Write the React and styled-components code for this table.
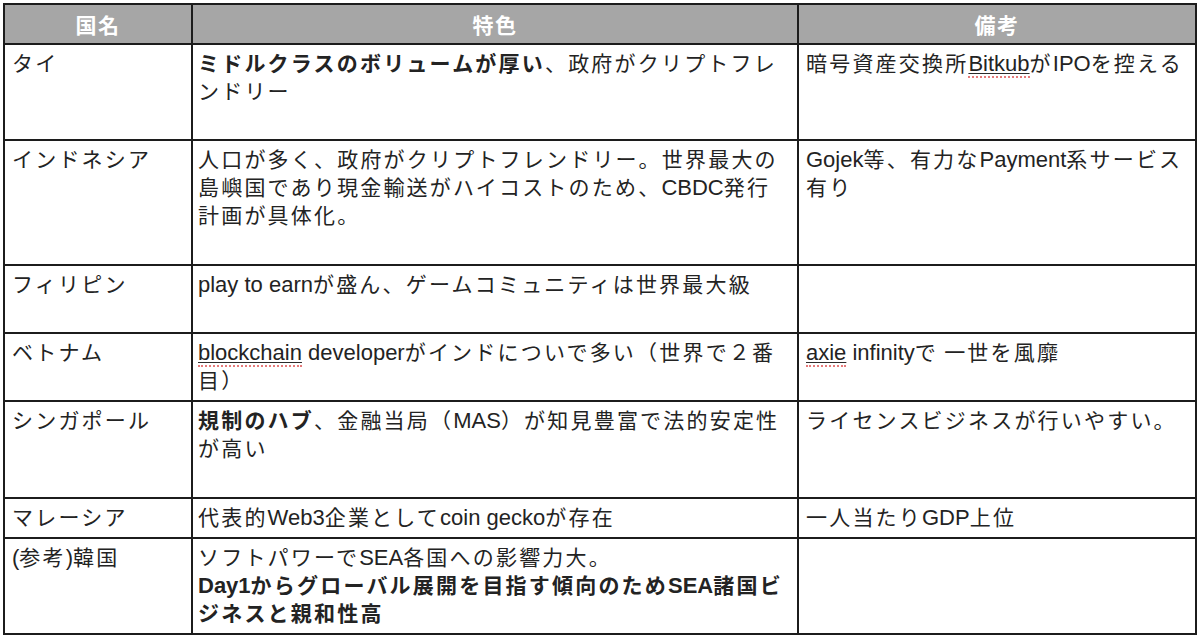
import React from 'react';
import styled, { createGlobalStyle } from 'styled-components';

const Global = createGlobalStyle`
  html, body { margin: 0; padding: 0; background: #fff; }
  body { font-family: "Liberation Sans", "Noto Sans CJK JP", sans-serif; }
`;

const Page = styled.div`
  width: 1200px;
  height: 637px;
  box-sizing: border-box;
  padding: 3px 0 0 3px;
  background: #fff;
`;

const Table = styled.table`
  border-collapse: collapse;
  table-layout: fixed;
  width: 1194px;
  font-family: "Liberation Sans", "Noto Sans CJK JP", sans-serif;
  color: #232323;
`;

const Col = styled.col`
  width: ${(p) => p.$w}px;
`;

const HeadRow = styled.tr`
  height: 40px;
  background: #a6a6a6;
`;

const HeadCell = styled.th`
  border: 2px solid #1c1c1c;
  padding: 0;
  color: #fff;
  font-size: 21px;
  font-weight: 700;
  letter-spacing: 1.5px;
  text-align: center;
  vertical-align: middle;
`;

const Row = styled.tr`
  height: ${(p) => p.$h}px;
`;

const Cell = styled.td`
  border: 2px solid #1c1c1c;
  padding: 5px 6px 0 ${(p) => p.$pl}px;
  vertical-align: top;
  font-size: 21px;
  line-height: 28px;
  letter-spacing: 2.2px;
  white-space: nowrap;
`;

const Latin = styled.span`
  letter-spacing: 0;
  font-size: 22px;
`;

const Spell = styled(Latin)`
  text-decoration: underline 1px #2a2a2a;
  text-underline-offset: 2px;
  border-bottom: 2px dotted #e57a7a;
`;

const Strong = styled.strong`
  font-weight: 700;
`;

const tx = (s) =>
  s.split(/([\x20-\x7E]+)/).map((part, i) =>
    /^[\x20-\x7E]+$/.test(part) ? <Latin key={i}>{part}</Latin> : part
  );

const rows = [
  {
    h: 96,
    name: 'タイ',
    feat: (
      <>
        <Strong>{tx('ミドルクラスのボリュームが厚い')}</Strong>
        {tx('、政府がクリプトフレ')}
        <br />
        {tx('ンドリー')}
      </>
    ),
    note: (
      <>
        {tx('暗号資産交換所')}
        <Spell>Bitkub</Spell>
        {tx('がIPOを控える')}
      </>
    ),
  },
  {
    h: 125,
    name: 'インドネシア',
    feat: (
      <>
        {tx('人口が多く、政府がクリプトフレンドリー。世界最大の')}
        <br />
        {tx('島嶼国であり現金輸送がハイコストのため、CBDC発行')}
        <br />
        {tx('計画が具体化。')}
      </>
    ),
    note: (
      <>
        {tx('Gojek等、有力なPayment系サービス')}
        <br />
        {tx('有り')}
      </>
    ),
  },
  {
    h: 68,
    name: 'フィリピン',
    feat: <>{tx('play to earnが盛ん、ゲームコミュニティは世界最大級')}</>,
    note: null,
  },
  {
    h: 68,
    name: 'ベトナム',
    feat: (
      <>
        <Spell>blockchain</Spell>
        {tx(' developerがインドについで多い（世界で２番')}
        <br />
        {tx('目）')}
      </>
    ),
    note: (
      <>
        <Spell>axie</Spell>
        {tx(' infinityで 一世を風靡')}
      </>
    ),
  },
  {
    h: 97,
    name: 'シンガポール',
    feat: (
      <>
        <Strong>{tx('規制のハブ')}</Strong>
        {tx('、金融当局（MAS）が知見豊富で法的安定性')}
        <br />
        {tx('が高い')}
      </>
    ),
    note: <>{tx('ライセンスビジネスが行いやすい。')}</>,
  },
  {
    h: 40,
    name: 'マレーシア',
    feat: <>{tx('代表的Web3企業としてcoin geckoが存在')}</>,
    note: <>{tx('一人当たりGDP上位')}</>,
  },
  {
    h: 96,
    name: '(参考)韓国',
    feat: (
      <>
        {tx('ソフトパワーでSEA各国への影響力大。')}
        <br />
        <Strong>{tx('Day1からグローバル展開を目指す傾向のためSEA諸国ビ')}</Strong>
        <br />
        <Strong>{tx('ジネスと親和性高')}</Strong>
      </>
    ),
    note: null,
  },
];

export default function App() {
  return (
    <Page>
      <Global />
      <Table>
        <colgroup>
          <Col $w={188} />
          <Col $w={606} />
          <Col $w={398} />
        </colgroup>
        <thead>
          <HeadRow>
            <HeadCell>国名</HeadCell>
            <HeadCell>特色</HeadCell>
            <HeadCell>備考</HeadCell>
          </HeadRow>
        </thead>
        <tbody>
          {rows.map((r) => (
            <Row key={r.name} $h={r.h}>
              <Cell $pl={7}>{tx(r.name)}</Cell>
              <Cell $pl={5}>{r.feat}</Cell>
              <Cell $pl={7}>{r.note}</Cell>
            </Row>
          ))}
        </tbody>
      </Table>
    </Page>
  );
}
